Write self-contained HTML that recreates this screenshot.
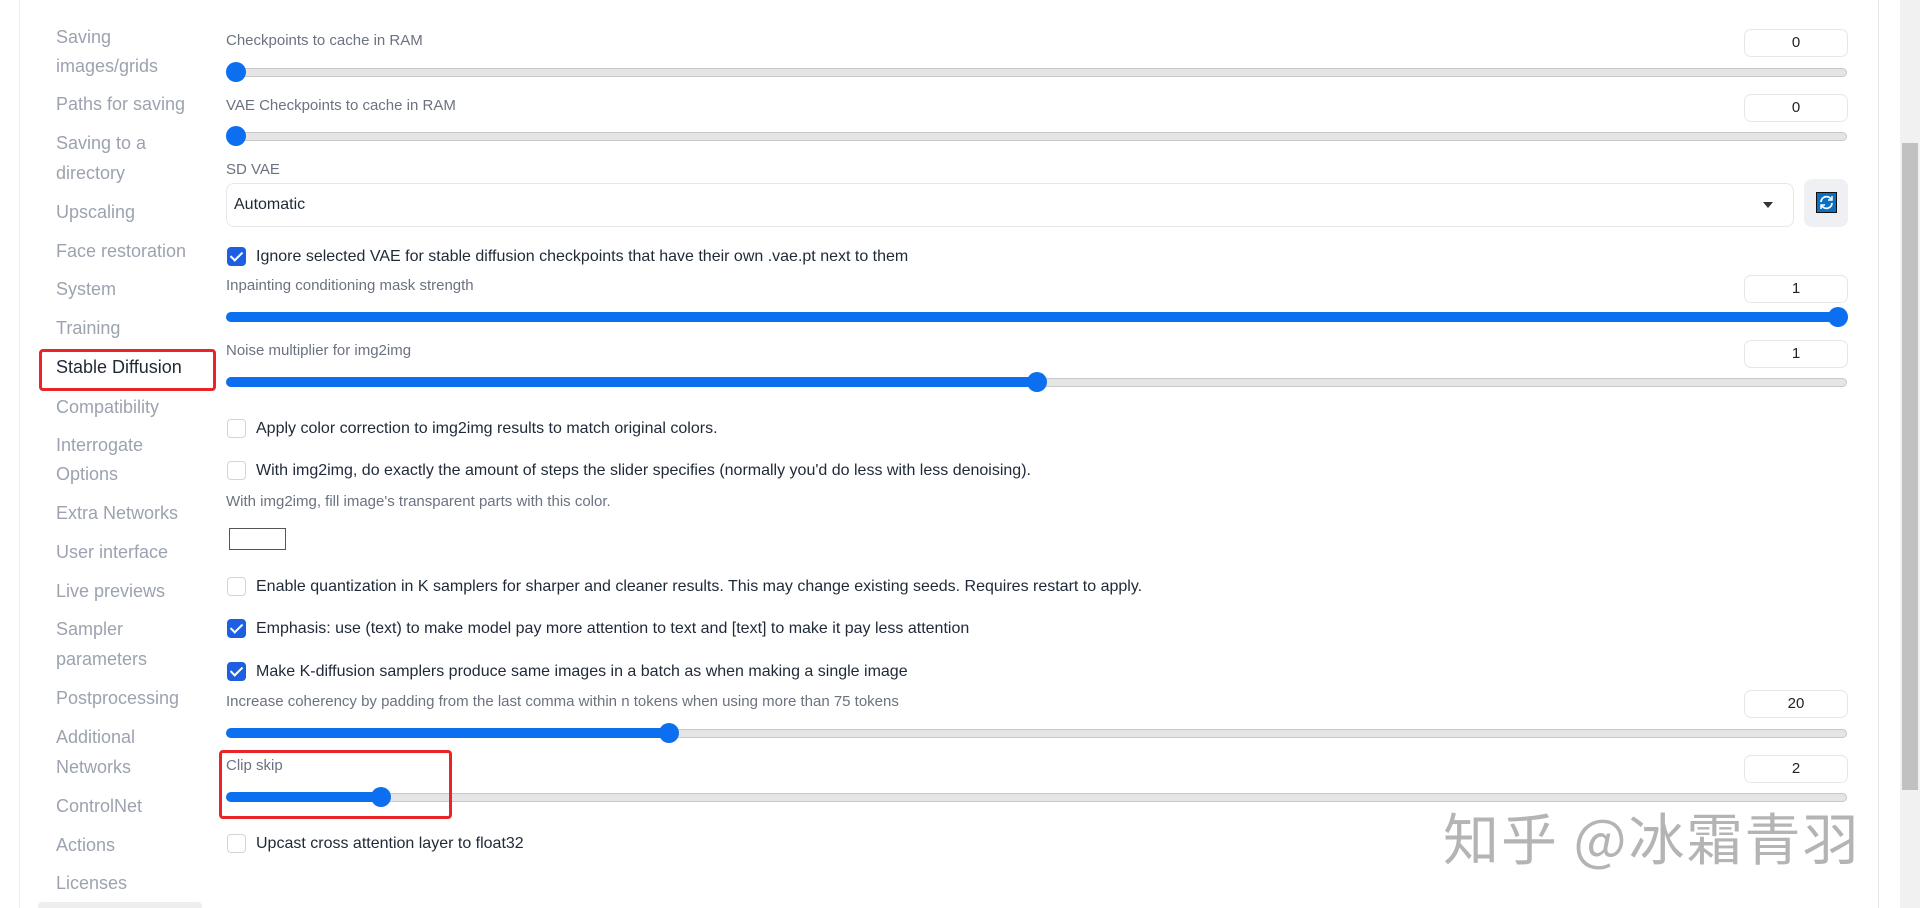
<!DOCTYPE html>
<html><head><meta charset="utf-8"><style>
*{margin:0;padding:0;box-sizing:border-box}
body{width:1920px;height:908px;overflow:hidden;background:#fff;font-family:"Liberation Sans","Noto Sans CJK SC",sans-serif;position:relative}
.a{position:absolute;white-space:nowrap}
.nav{position:absolute;left:56px;font-size:18px;color:#9ca3af;white-space:nowrap}
.lbl{position:absolute;left:226px;font-size:15px;color:#6b7280;white-space:nowrap}
.num{position:absolute;left:1744px;width:104px;height:28px;border:1px solid #e5e7eb;border-radius:7px;font-size:15px;color:#222;text-align:center;line-height:26px}
.tr{position:absolute;left:226px;width:1621px;height:9px;background:#e5e5e5;border:1px solid #c8c8c8;border-radius:5px}
.fill{position:absolute;left:226px;height:10px;background:#0b6ff0;border-radius:5px}
.th{position:absolute;width:20px;height:20px;border-radius:50%;background:#0b6ff0}
.cb{position:absolute;left:227px;width:19px;height:19px;border:1px solid #d1d5db;border-radius:4px;background:#fff}
.cb.on{background:#1d5fe0;border-color:#1d5fe0}
.cb.on::after{content:"";position:absolute;left:5px;top:1px;width:5px;height:10px;border:solid #fff;border-width:0 2.5px 2.5px 0;transform:rotate(45deg)}
.ct{position:absolute;left:256px;font-size:16px;color:#1f2937;white-space:nowrap}
</style></head><body>
<div class="a" style="left:19px;top:0;width:1px;height:908px;background:#eee"></div>
<div class="a" style="left:1878px;top:0;width:1px;height:908px;background:#e5e7eb"></div>
<div class="a" style="left:1900px;top:0;width:20px;height:908px;background:#f1f1f1"></div>
<div class="a" style="left:1902px;top:143px;width:16px;height:647px;background:#c1c1c1"></div>

<div class="nav" style="top:27px">Saving</div>
<div class="nav" style="top:56px">images/grids</div>
<div class="nav" style="top:94px">Paths for saving</div>
<div class="nav" style="top:133px">Saving to a</div>
<div class="nav" style="top:163px">directory</div>
<div class="nav" style="top:202px">Upscaling</div>
<div class="nav" style="top:241px">Face restoration</div>
<div class="nav" style="top:279px">System</div>
<div class="nav" style="top:318px">Training</div>
<div class="nav" style="top:357px;color:#1f2937">Stable Diffusion</div>
<div class="a" style="left:39px;top:349px;width:177px;height:42px;border:3px solid #e8262a;border-radius:4px"></div>
<div class="nav" style="top:397px">Compatibility</div>
<div class="nav" style="top:435px">Interrogate</div>
<div class="nav" style="top:464px">Options</div>
<div class="nav" style="top:503px">Extra Networks</div>
<div class="nav" style="top:542px">User interface</div>
<div class="nav" style="top:581px">Live previews</div>
<div class="nav" style="top:619px">Sampler</div>
<div class="nav" style="top:649px">parameters</div>
<div class="nav" style="top:688px">Postprocessing</div>
<div class="nav" style="top:727px">Additional</div>
<div class="nav" style="top:757px">Networks</div>
<div class="nav" style="top:796px">ControlNet</div>
<div class="nav" style="top:835px">Actions</div>
<div class="nav" style="top:873px">Licenses</div>
<div class="a" style="left:38px;top:902px;width:164px;height:6px;background:#eee;border-radius:4px 4px 0 0"></div>

<div class="lbl" style="top:32px">Checkpoints to cache in RAM</div>
<div class="num" style="top:29px">0</div>
<div class="tr" style="top:68px"></div><div class="th" style="left:226px;top:62px"></div>

<div class="lbl" style="top:97px">VAE Checkpoints to cache in RAM</div>
<div class="num" style="top:94px">0</div>
<div class="tr" style="top:132px"></div><div class="th" style="left:226px;top:126px"></div>

<div class="lbl" style="top:161px">SD VAE</div>
<div class="a" style="left:226px;top:183px;width:1568px;height:44px;border:1px solid #e5e7eb;border-radius:8px"></div>
<div class="a" style="left:234px;top:196px;font-size:16px;color:#1f2937">Automatic</div>
<div class="a" style="left:1763px;top:202px;width:0;height:0;border-left:5px solid transparent;border-right:5px solid transparent;border-top:6px solid #333"></div>
<div class="a" style="left:1804px;top:179px;width:44px;height:48px;background:#eef0f3;border-radius:8px"></div>
<div class="a" style="left:1816px;top:192px;width:21px;height:21px;background:#0b6fc2;border:1px solid #111"><svg width="19" height="19" viewBox="0 0 19 19"><path d="M4 9a5.5 5.5 0 0 1 10-3M15 10a5.5 5.5 0 0 1-10 3" fill="none" stroke="#fff" stroke-width="1.8"/><path d="M15 3v4h-4M4 16v-4h4" fill="none" stroke="#fff" stroke-width="1.5"/></svg></div>

<div class="cb on" style="top:247px"></div>
<div class="ct" style="top:248px">Ignore selected VAE for stable diffusion checkpoints that have their own .vae.pt next to them</div>

<div class="lbl" style="top:277px">Inpainting conditioning mask strength</div>
<div class="num" style="top:275px">1</div>
<div class="tr" style="top:313px"></div><div class="fill" style="top:312px;width:1612px"></div><div class="th" style="left:1828px;top:307px"></div>

<div class="lbl" style="top:342px">Noise multiplier for img2img</div>
<div class="num" style="top:340px">1</div>
<div class="tr" style="top:378px"></div><div class="fill" style="top:377px;width:812px"></div><div class="th" style="left:1027px;top:372px"></div>

<div class="cb" style="top:419px"></div>
<div class="ct" style="top:420px">Apply color correction to img2img results to match original colors.</div>
<div class="cb" style="top:461px"></div>
<div class="ct" style="top:462px">With img2img, do exactly the amount of steps the slider specifies (normally you'd do less with less denoising).</div>
<div class="lbl" style="top:493px">With img2img, fill image's transparent parts with this color.</div>
<div class="a" style="left:229px;top:528px;width:57px;height:22px;border:1px solid #555;background:#fff"></div>

<div class="cb" style="top:577px"></div>
<div class="ct" style="top:578px">Enable quantization in K samplers for sharper and cleaner results. This may change existing seeds. Requires restart to apply.</div>
<div class="cb on" style="top:619px"></div>
<div class="ct" style="top:620px">Emphasis: use (text) to make model pay more attention to text and [text] to make it pay less attention</div>
<div class="cb on" style="top:662px"></div>
<div class="ct" style="top:663px">Make K-diffusion samplers produce same images in a batch as when making a single image</div>

<div class="lbl" style="top:693px">Increase coherency by padding from the last comma within n tokens when using more than 75 tokens</div>
<div class="num" style="top:690px">20</div>
<div class="tr" style="top:729px"></div><div class="fill" style="top:728px;width:446px"></div><div class="th" style="left:659px;top:723px"></div>

<div class="lbl" style="top:757px">Clip skip</div>
<div class="num" style="top:755px">2</div>
<div class="tr" style="top:793px"></div><div class="fill" style="top:792px;width:158px"></div><div class="th" style="left:371px;top:787px"></div>
<div class="a" style="left:219px;top:750px;width:233px;height:69px;border:3px solid #e8262a;border-radius:4px"></div>

<div class="cb" style="top:834px"></div>
<div class="ct" style="top:835px">Upcast cross attention layer to float32</div>

<div class="a" style="left:1443px;top:796px;font-size:56px;letter-spacing:2px;color:#b4b4b4;font-family:'Noto Sans CJK SC',sans-serif">知乎 @冰霜青羽</div>
</body></html>
